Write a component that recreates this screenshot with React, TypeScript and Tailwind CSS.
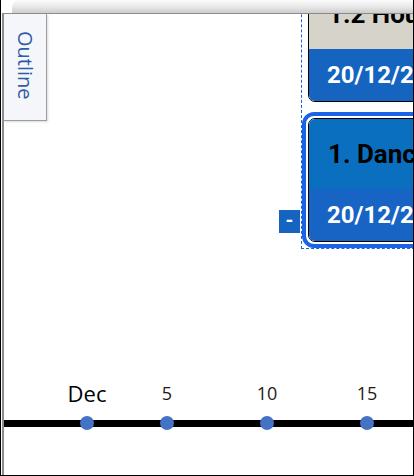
const ticks = [
  { label: 'Dec', day: 1, big: true },
  { label: '5', day: 5 },
  { label: '10', day: 10 },
  { label: '15', day: 15 },
];

// day -> x position on the timeline canvas
const dayX = (day: number) => 83 + (day - 1) * 20;

const EventCard = ({
  title,
  date,
  selected,
}: {
  title: string;
  date: string;
  selected?: boolean;
}) => (
  <div
    className={
      selected
        ? 'rounded-[12px] border-[4px] border-[#1a62e6] bg-white p-[2px]'
        : 'rounded-[12px] border-[4px] border-transparent p-[2px]'
    }
  >
    <div className="w-[220px] h-[124px] flex flex-col rounded-[7px] border border-black overflow-hidden">
      <div
        className={
          selected
            ? 'h-[70px] flex items-center pl-[19px] bg-[#0a6fbe]'
            : 'h-[70px] flex items-center pl-[19px] bg-[#d6d3cb]'
        }
      >
        <span className="text-[26px] font-bold text-black leading-none whitespace-nowrap">{title}</span>
      </div>
      <div
        className={
          selected
            ? 'flex-1 flex items-center pl-[18px] bg-[#1864c4]'
            : 'flex-1 flex items-center pl-[18px] bg-[#1565c0]'
        }
      >
        <span className="text-[24px] font-bold text-white leading-none whitespace-nowrap">{date}</span>
      </div>
    </div>
  </div>
);

export default function App() {
  return (
    <div className="w-[414px] h-[476px] flex flex-col bg-white border-x border-b border-black overflow-hidden font-['Roboto',sans-serif]">
      {/* Top scroll strip */}
      <div className="h-[13px] shrink-0 pl-[11px]">
        <div className="h-full rounded-tl-[7px] bg-gradient-to-b from-[#fbfbfb] via-[#e9e9e9] to-[#cdcdcd]" />
      </div>

      <div className="flex-1 ml-px border-t border-l-2 border-[#8c8c8c] relative overflow-hidden">
        {/* Outline side tab */}
        <div className="absolute left-0 top-0 w-[43px] h-[107px] flex justify-center pt-[17px] bg-[#f4f6f9] border-r border-b border-[#9d9d9d] shadow-[1px_1px_2px_rgba(0,0,0,0.15)]">
          <span className="[writing-mode:vertical-rl] text-[20px] leading-none text-[#2f5ca8] font-['Open_Sans',sans-serif]">
            Outline
          </span>
        </div>

        {/* Selection frame */}
        <div className="absolute left-[297px] top-[-40px] w-[200px] h-[275px] border-l border-b border-dashed border-[#1565d8]" />

        {/* Event cards */}
        <div className="absolute left-[298px] top-[-42px]">
          <EventCard title="1.2 Hour of Code" date="20/12/2024" />
        </div>
        <div className="absolute left-[298px] top-[98px]">
          <EventCard title="1. Dance Show" date="20/12/2024" selected />
        </div>

        {/* Collapse button */}
        <div className="absolute left-[275px] top-[196px] w-[21px] h-[23px] flex items-center justify-center bg-[#1565c0] text-white text-[20px] font-bold leading-none pb-[3px]">
          -
        </div>

        {/* Timeline axis */}
        <div className="absolute left-0 right-0 top-[406px] h-[7px] bg-black" />
        {ticks.map((t) => (
          <div key={t.label}>
            <div
              className={
                t.big
                  ? 'absolute w-[60px] -ml-[30px] top-[368px] text-center text-[22px] text-black leading-none font-["Open_Sans",sans-serif]'
                  : 'absolute w-[60px] -ml-[30px] top-[370px] text-center text-[18px] text-[#1f1a14] leading-none font-["Open_Sans",sans-serif]'
              }
              style={{ left: dayX(t.day) }}
            >
              {t.label}
            </div>
            <div
              className="absolute top-[402px] w-[14px] h-[14px] -ml-[7px] rounded-full bg-[#4472c4]"
              style={{ left: dayX(t.day) }}
            />
          </div>
        ))}
      </div>
    </div>
  );
}
